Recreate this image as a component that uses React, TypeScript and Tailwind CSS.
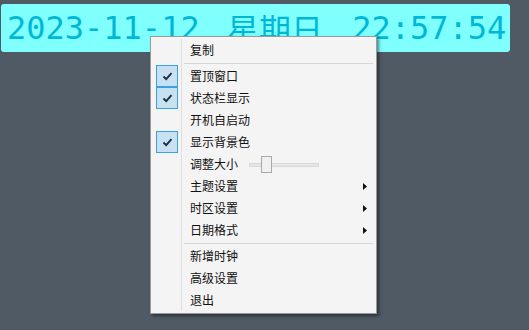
import { ReactNode } from "react";

type Item =
  | { kind: "item"; label: string; checked?: boolean; submenu?: boolean; slider?: boolean }
  | { kind: "sep" };

const items: Item[] = [
  { kind: "item", label: "复制" },
  { kind: "sep" },
  { kind: "item", label: "置顶窗口", checked: true },
  { kind: "item", label: "状态栏显示", checked: true },
  { kind: "item", label: "开机自启动" },
  { kind: "item", label: "显示背景色", checked: true },
  { kind: "item", label: "调整大小", slider: true },
  { kind: "item", label: "主题设置", submenu: true },
  { kind: "item", label: "时区设置", submenu: true },
  { kind: "item", label: "日期格式", submenu: true },
  { kind: "sep" },
  { kind: "item", label: "新增时钟" },
  { kind: "item", label: "高级设置" },
  { kind: "item", label: "退出" },
];

function CheckBox() {
  return (
    <div className="flex h-[22px] w-[22px] items-center justify-center border border-[#3d9ee0] bg-[#c6e1f2]">
      <svg width="11" height="9" viewBox="0 0 11 9">
        <path d="M1.5 4.5 L4.2 7.2 L9.5 1.2" fill="none" stroke="#1e2a33" strokeWidth="1.8" />
      </svg>
    </div>
  );
}

function Slider() {
  return (
    <div className="relative ml-[11px] h-[17px] w-[70px]">
      <div className="absolute left-0 right-0 top-[7px] h-[4px] border border-[#d8d8d8] bg-[#e6e6e6]" />
      <div className="absolute left-[12px] top-0 h-[17px] w-[11px] border border-[#a9a9a9] bg-[#f0f0f0]" />
    </div>
  );
}

function Row({ item }: { item: Extract<Item, { kind: "item" }> }): ReactNode {
  return (
    <div className="flex h-[22px] items-center">
      <div className="flex w-[31px] justify-end pr-[4px]">{item.checked ? <CheckBox /> : null}</div>
      <div className="w-[8px]" />
      <span className="text-[12px] leading-none text-[#111]">{item.label}</span>
      {item.slider ? <Slider /> : null}
      <div className="flex-1" />
      {item.submenu ? (
        <svg width="4" height="7" viewBox="0 0 4 7" className="mr-[9px]">
          <path d="M0 0 L4 3.5 L0 7 Z" fill="#111" />
        </svg>
      ) : null}
    </div>
  );
}

export default function App() {
  return (
    <div
      className="relative h-[330px] w-[529px] overflow-hidden bg-[#4f5a65]"
      style={{ fontFamily: '"Noto Sans CJK SC", "Noto Sans", sans-serif' }}
    >
      <div className="ml-[1px] pt-[4px]">
        <div
          className="flex h-[48px] w-[509px] items-center rounded-[3px] bg-[#80ffff] pl-[6px] text-[32px] leading-none text-[#00b8d6]"
          style={{ fontFamily: '"DejaVu Sans Mono", "Noto Sans CJK SC", monospace' }}
        >
          <span className="whitespace-pre">2023-11-12 </span>
          <span className="ml-[8px] mr-[10px] whitespace-pre" style={{ fontFamily: '"Noto Sans CJK SC", sans-serif' }}>
            星期日
          </span>
          <span className="whitespace-pre"> 22:57:54</span>
        </div>
      </div>

      <div className="absolute left-[150px] top-[36px] w-[227px] border border-[#9a9a9a] bg-[#f4f4f4] py-[2px] shadow-[2px_2px_3px_rgba(0,0,0,0.45)]">
        <div className="absolute bottom-[2px] left-[30px] top-[2px] w-px bg-[#e0e0e0]" />
        {items.map((item, i) =>
          item.kind === "sep" ? (
            <div key={i} className="flex h-[4px] items-center pl-[33px] pr-[3px]">
              <div className="h-px w-full bg-[#d7d7d7]" />
            </div>
          ) : (
            <Row key={i} item={item} />
          )
        )}
      </div>
    </div>
  );
}
